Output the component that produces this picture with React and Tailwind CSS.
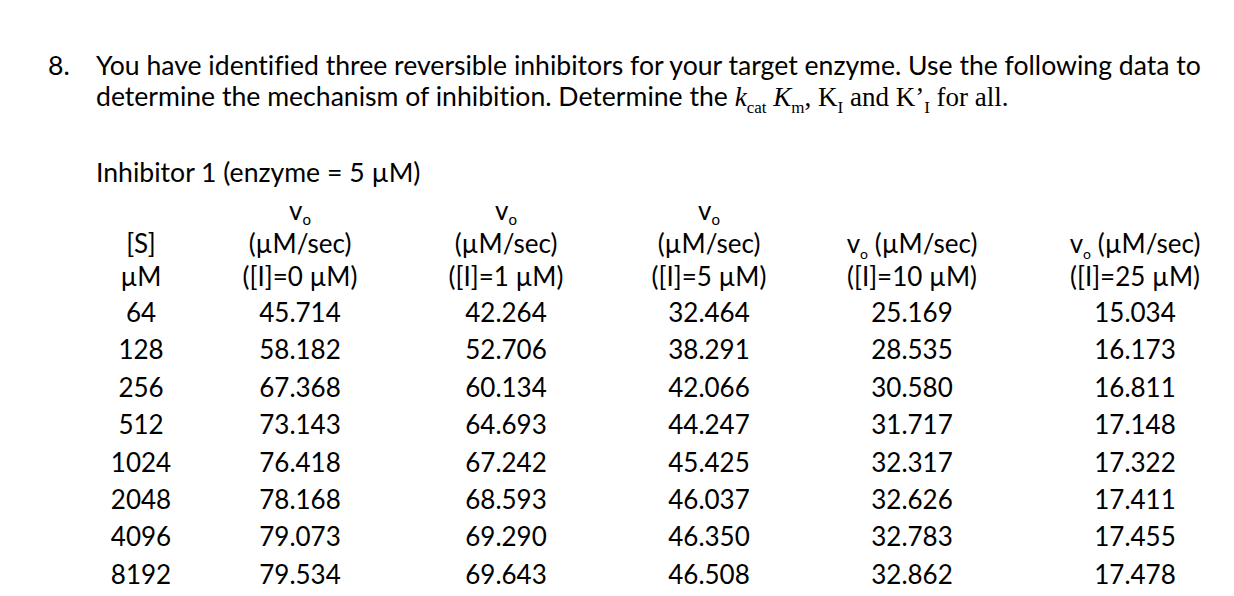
const rows = [
  ["64", "45.714", "42.264", "32.464", "25.169", "15.034"],
  ["128", "58.182", "52.706", "38.291", "28.535", "16.173"],
  ["256", "67.368", "60.134", "42.066", "30.580", "16.811"],
  ["512", "73.143", "64.693", "44.247", "31.717", "17.148"],
  ["1024", "76.418", "67.242", "45.425", "32.317", "17.322"],
  ["2048", "78.168", "68.593", "46.037", "32.626", "17.411"],
  ["4096", "79.073", "69.290", "46.350", "32.783", "17.455"],
  ["8192", "79.534", "69.643", "46.508", "32.862", "17.478"],
];

const cols = "grid grid-cols-[110px_208px_204px_202px_204px_242px]";

const Vo = () => (
  <span>
    v<sub className="text-[15px] leading-none align-[-1px]">o</sub>
  </span>
);

const VoSmall = () => (
  <span>
    v<sub className="text-[14px] leading-none align-[-2px]">o</sub>
  </span>
);

const Sub = ({ children }) => (
  <sub className="text-[17px] leading-none align-[-3px] not-italic">
    {children}
  </sub>
);

export default function App() {
  return (
    <div className="w-[1234px] h-[596px] overflow-hidden bg-white text-black font-['Lato',sans-serif] text-[26.6px] [font-variant-ligatures:none]">
      <div className="pt-[50px] pl-[48px]">
        <div className="flex leading-[31px]">
          <span className="w-[48px] shrink-0">8.</span>
          <div className="whitespace-nowrap">
            <p>
              You have identified three reversible inhibitors for your target
              enzyme. Use the following data to
            </p>
            <p>
              determine the mechanism of inhibition. Determine the{" "}
              <span className="font-['Liberation_Serif',serif] text-[27px]">
                <i>k</i>
                <Sub>cat</Sub> <i>K</i>
                <Sub>m</Sub>, K<Sub>I</Sub> and K’<Sub>I</Sub> for all.
              </span>
            </p>
          </div>
        </div>

        <p className="mt-[44px] pl-[48px] leading-[31px]">
          Inhibitor 1 (enzyme = 5 µM)
        </p>

        <div className="mt-[6px] ml-[38px] text-center text-[26px] leading-[33px]">
          <div className={cols}>
            <span />
            <span><Vo /></span>
            <span><Vo /></span>
            <span><Vo /></span>
            <span />
            <span />
          </div>
          <div className={cols}>
            <span>[S]</span>
            <span>(µM/sec)</span>
            <span>(µM/sec)</span>
            <span>(µM/sec)</span>
            <span><VoSmall /> (µM/sec)</span>
            <span><VoSmall /> (µM/sec)</span>
          </div>
          <div className={cols}>
            <span>µM</span>
            <span>([I]=0 µM)</span>
            <span>([I]=1 µM)</span>
            <span>([I]=5 µM)</span>
            <span>([I]=10 µM)</span>
            <span>([I]=25 µM)</span>
          </div>

          <div className="mt-[1px] leading-[37.4px]">
            {rows.map((r) => (
              <div key={r[0]} className={cols}>
                {r.map((v, i) => (
                  <span key={i}>{v}</span>
                ))}
              </div>
            ))}
          </div>
        </div>
      </div>
    </div>
  );
}
